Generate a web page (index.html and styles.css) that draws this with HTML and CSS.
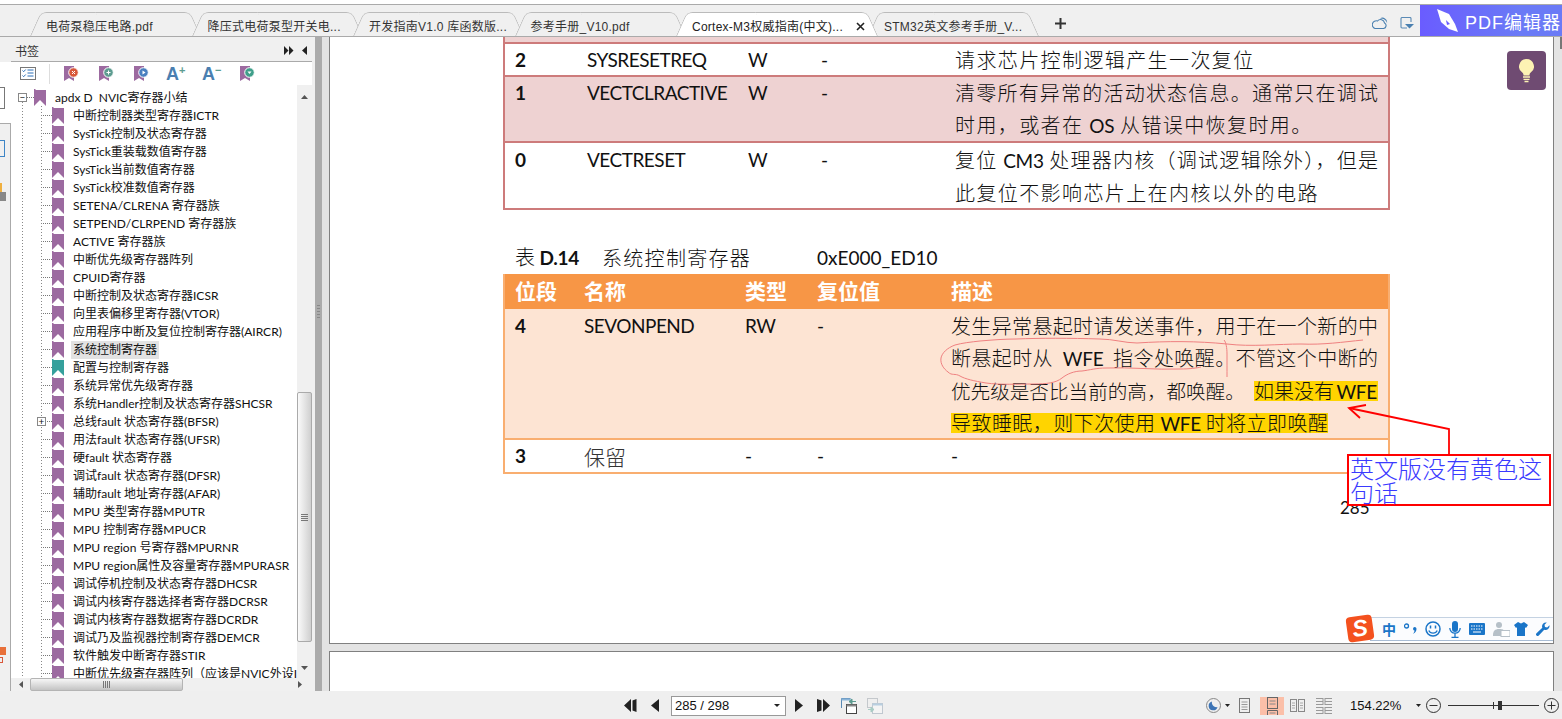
FILE: index.html
```html
<!DOCTYPE html>
<html lang="zh-CN">
<head>
    <meta charset="UTF-8">
    <title>Cortex-M3权威指南(中文).pdf</title>
    <link rel="stylesheet" href="styles.css">
</head>
<body>
<svg class="defs" width="0" height="0">
    <symbol id="mark" viewBox="0 0 12 17"><path d="M0 0h1l1 1h10v16l-1-1-1-1-1-1-1-1-1-1-1-1-1 1-1 1-1 1-1 1-1 1-1 1V2z"/></symbol>
</svg>
<div class="app">
    <div class="top-strip"></div>
    <div class="tabbar">
        <div class="tabs">
            <div class="tab">电荷泵稳压电路.pdf</div>
            <div class="tab">降压式电荷泵型开关电...</div>
            <div class="tab">开发指南V1.0 库函数版...</div>
            <div class="tab">参考手册_V10.pdf</div>
            <div class="tab active">Cortex-M3权威指南(中文)...
                <svg class="tab-close" width="9" height="9" viewBox="0 0 9 9"><path d="M1 1l7 7M8 1l-7 7" stroke="#222" stroke-width="1.6"/></svg>
            </div>
            <div class="tab">STM32英文参考手册_V...</div>
        </div>
        <svg class="tab-add" width="11" height="11" viewBox="0 0 11 11"><path d="M0 4.500h11v2H0zM4.500 0h2v11h-2z" fill="#333"/></svg>
        <svg class="cloud" width="16" height="12" viewBox="0 0 16 12"><path d="M3 11.500h8.500a3 3 0 0 0 1-5.600A4 4 0 0 0 5.500 4 3.500 3.500 0 0 0 3 11.500z" fill="none" stroke="#4a80b0" stroke-width="1.100"/><path d="M8 1.500a4.500 4.500 0 0 1 7 4.500c-.5-1.800-2.500-3.800-4.500-4.200z" fill="#4a80b0"/></svg>
        <svg class="save" width="14" height="12" viewBox="0 0 14 12"><path d="M7 11H2a1 1 0 0 1-1-1V1.500a1 1 0 0 1 1-1h8a1 1 0 0 1 1 1V5" fill="none" stroke="#5a8ab5" stroke-width="1.100"/><path d="M5 7h9l-4.500 4.500z" fill="#4a80b0"/></svg>
        <div class="pdf-edit">
            <svg width="22" height="24" viewBox="0 0 22 24"><path d="M0 0l12 5 6 10 3 8-9-3-8-7z" fill="#fff"/><path d="M9 11l4 4-3 1z" fill="#6a5cff"/></svg>
            <span>PDF编辑器</span>
        </div>
    </div>

    <div class="main">
        <div class="rail">
            <div class="rail-top"></div>
            <div class="rail-tab"><span class="rail-doc"></span></div>
            <div class="rail-rest">
                <span class="rail-blue"></span>
                <span class="rail-orange"></span>
                <span class="rail-gray"></span>
                <span class="rail-diamond"></span>
                <span class="rail-red"></span>
            </div>
        </div>

        <div class="sidebar">
            <div class="side-head">
                <span>书签</span>
                <div class="side-arrows">
                    <svg width="10" height="9" viewBox="0 0 10 9"><path d="M0 0l4.500 4.500L0 9zM5 0l4.500 4.500L5 9z" fill="#222"/></svg>
                    <svg width="5" height="9" viewBox="0 0 5 9"><path d="M5 0L0 4.500 5 9z" fill="#222"/></svg>
                </div>
            </div>
            <div class="side-body">
                <div class="side-tools">
                    <svg class="checklist" width="16" height="13" viewBox="0 0 16 13"><rect x=".5" y=".5" width="15" height="12" fill="none" stroke="#777"/><path d="M2.500 3.500l1.200 1.200 2-2.200M2.500 8.500l1.200 1.200 2-2.200" fill="none" stroke="#2a6fb8"/><path d="M7.500 3h6M7.500 6h6M7.500 9h6" stroke="#2a6fb8"/></svg>
                    <span class="tool-sep"></span>
                    <svg class="tool" width="15" height="17" viewBox="0 0 15 17"><path d="M0 1h10v15l-5-3-5 3z" fill="#9c6aa0"/><circle cx="9.500" cy="7.500" r="4.800" fill="#d9573a" stroke="#fff"/><path d="M8 6l3 3M11 6l-3 3" stroke="#fff"/></svg>
                    <svg class="tool" width="15" height="17" viewBox="0 0 15 17"><path d="M0 1h10v15l-5-3-5 3z" fill="#9c6aa0"/><circle cx="9.500" cy="7.500" r="4.800" fill="#5d9c90" stroke="#fff"/><path d="M7.500 7.500h4M9.500 5.500v4" stroke="#fff"/></svg>
                    <svg class="tool" width="15" height="17" viewBox="0 0 15 17"><path d="M0 1h10v15l-5-3-5 3z" fill="#9c6aa0"/><circle cx="9.500" cy="7.500" r="4.800" fill="#4a80c0" stroke="#fff"/><path d="M8.500 5.500l3 2-3 2z" fill="#fff"/></svg>
                    <span class="font-tool">A<i>+</i></span>
                    <span class="font-tool minus">A<i>−</i></span>
                    <svg class="tool last" width="15" height="17" viewBox="0 0 15 17"><path d="M0 1h10v15l-5-3-5 3z" fill="#9c6aa0"/><circle cx="9.500" cy="7.500" r="4.800" fill="#3f9f8a" stroke="#fff"/><path d="M7.500 6.500l2 2.500 2-2.500z" fill="#fff"/></svg>
                </div>
                <div class="side-tree">
                    <div class="tree">
                        <div class="node root">
                            <span class="expander">−</span><span class="dash"></span>
                            <svg class="mark"><use href="#mark"/></svg>
                            <span class="label">apdx D  NVIC寄存器小结</span>
                        </div>
                        <div class="node"><span class="dash"></span><svg class="mark"><use href="#mark"/></svg><span class="label">中断控制器类型寄存器ICTR</span></div>
                        <div class="node"><span class="dash"></span><svg class="mark"><use href="#mark"/></svg><span class="label">SysTick控制及状态寄存器</span></div>
                        <div class="node"><span class="dash"></span><svg class="mark"><use href="#mark"/></svg><span class="label">SysTick重装载数值寄存器</span></div>
                        <div class="node"><span class="dash"></span><svg class="mark"><use href="#mark"/></svg><span class="label">SysTick当前数值寄存器</span></div>
                        <div class="node"><span class="dash"></span><svg class="mark"><use href="#mark"/></svg><span class="label">SysTick校准数值寄存器</span></div>
                        <div class="node"><span class="dash"></span><svg class="mark"><use href="#mark"/></svg><span class="label">SETENA/CLRENA 寄存器族</span></div>
                        <div class="node"><span class="dash"></span><svg class="mark"><use href="#mark"/></svg><span class="label">SETPEND/CLRPEND 寄存器族</span></div>
                        <div class="node"><span class="dash"></span><svg class="mark"><use href="#mark"/></svg><span class="label">ACTIVE 寄存器族</span></div>
                        <div class="node"><span class="dash"></span><svg class="mark"><use href="#mark"/></svg><span class="label">中断优先级寄存器阵列</span></div>
                        <div class="node"><span class="dash"></span><svg class="mark"><use href="#mark"/></svg><span class="label">CPUID寄存器</span></div>
                        <div class="node"><span class="dash"></span><svg class="mark"><use href="#mark"/></svg><span class="label">中断控制及状态寄存器ICSR</span></div>
                        <div class="node"><span class="dash"></span><svg class="mark"><use href="#mark"/></svg><span class="label">向里表偏移里寄存器(VTOR)</span></div>
                        <div class="node"><span class="dash"></span><svg class="mark"><use href="#mark"/></svg><span class="label">应用程序中断及复位控制寄存器(AIRCR)</span></div>
                        <div class="node"><span class="dash"></span><svg class="mark"><use href="#mark"/></svg><span class="label selected">系统控制寄存器</span></div>
                        <div class="node"><span class="dash"></span><svg class="mark teal"><use href="#mark"/></svg><span class="label">配置与控制寄存器</span></div>
                        <div class="node"><span class="dash"></span><svg class="mark"><use href="#mark"/></svg><span class="label">系统异常优先级寄存器</span></div>
                        <div class="node"><span class="dash"></span><svg class="mark"><use href="#mark"/></svg><span class="label">系统Handler控制及状态寄存器SHCSR</span></div>
                        <div class="node"><span class="expander plus">+</span><span class="dash"></span><svg class="mark"><use href="#mark"/></svg><span class="label">总线fault 状态寄存器(BFSR)</span></div>
                        <div class="node"><span class="dash"></span><svg class="mark"><use href="#mark"/></svg><span class="label">用法fault 状态寄存器(UFSR)</span></div>
                        <div class="node"><span class="dash"></span><svg class="mark"><use href="#mark"/></svg><span class="label">硬fault 状态寄存器</span></div>
                        <div class="node"><span class="dash"></span><svg class="mark"><use href="#mark"/></svg><span class="label">调试fault 状态寄存器(DFSR)</span></div>
                        <div class="node"><span class="dash"></span><svg class="mark"><use href="#mark"/></svg><span class="label">辅助fault 地址寄存器(AFAR)</span></div>
                        <div class="node"><span class="dash"></span><svg class="mark"><use href="#mark"/></svg><span class="label">MPU 类型寄存器MPUTR</span></div>
                        <div class="node"><span class="dash"></span><svg class="mark"><use href="#mark"/></svg><span class="label">MPU 控制寄存器MPUCR</span></div>
                        <div class="node"><span class="dash"></span><svg class="mark"><use href="#mark"/></svg><span class="label">MPU region 号寄存器MPURNR</span></div>
                        <div class="node"><span class="dash"></span><svg class="mark"><use href="#mark"/></svg><span class="label">MPU region属性及容量寄存器MPURASR</span></div>
                        <div class="node"><span class="dash"></span><svg class="mark"><use href="#mark"/></svg><span class="label">调试停机控制及状态寄存器DHCSR</span></div>
                        <div class="node"><span class="dash"></span><svg class="mark"><use href="#mark"/></svg><span class="label">调试内核寄存器选择者寄存器DCRSR</span></div>
                        <div class="node"><span class="dash"></span><svg class="mark"><use href="#mark"/></svg><span class="label">调试内核寄存器数据寄存器DCRDR</span></div>
                        <div class="node"><span class="dash"></span><svg class="mark"><use href="#mark"/></svg><span class="label">调试乃及监视器控制寄存器DEMCR</span></div>
                        <div class="node"><span class="dash"></span><svg class="mark"><use href="#mark"/></svg><span class="label">软件触发中断寄存器STIR</span></div>
                        <div class="node"><span class="dash"></span><svg class="mark"><use href="#mark"/></svg><span class="label">中断优先级寄存器阵列（应该是NVIC外设I</span></div>
                    </div>
                    <div class="vscroll">
                        <div class="sb-arrow"><svg width="7" height="4" viewBox="0 0 7 4"><path d="M3.500 0L7 4H0z" fill="#555"/></svg></div>
                        <div class="vthumb"><span></span></div>
                        <div class="sb-arrow end"><svg width="7" height="4" viewBox="0 0 7 4"><path d="M0 0h7L3.500 4z" fill="#555"/></svg></div>
                    </div>
                </div>
                <div class="hscroll">
                    <div class="sb-arrow-h"><svg width="4" height="7" viewBox="0 0 4 7"><path d="M4 0v7L0 3.500z" fill="#555"/></svg></div>
                    <div class="hthumb"><span></span></div>
                    <div class="sb-arrow-h end"><svg width="4" height="7" viewBox="0 0 4 7"><path d="M0 0v7l4-3.500z" fill="#555"/></svg></div>
                </div>
            </div>
        </div>

        <div class="splitter"><span></span></div>

        <div class="docs">
            <div class="pane">
                <div class="page">
                    <div class="reg-table red">
                        <div class="strip"></div>
                        <div class="row">
                            <div class="cell bit">2</div><div class="cell">SYSRESETREQ</div><div class="cell">W</div><div class="cell">-</div>
                            <div class="desc"><div class="free">请求芯片控制逻辑产生一次复位</div></div>
                        </div>
                        <div class="row tint">
                            <div class="cell bit">1</div><div class="cell">VECTCLRACTIVE</div><div class="cell">W</div><div class="cell">-</div>
                            <div class="desc">
                                <div class="line">清零所有异常的活动状态信息。通常只在调试</div>
                                <div class="free">时用，或者在 <span class="en">OS</span> 从错误中恢复时用。</div>
                            </div>
                        </div>
                        <div class="row">
                            <div class="cell bit">0</div><div class="cell">VECTRESET</div><div class="cell">W</div><div class="cell">-</div>
                            <div class="desc">
                                <div class="line">复位 <span class="en">CM3</span> 处理器内核（调试逻辑除外），但是</div>
                                <div class="free">此复位不影响芯片上在内核以外的电路</div>
                            </div>
                        </div>
                    </div>

                    <div class="caption">
                        <span class="cap-title">表 <b class="en">D.14</b></span>
                        <span class="cap-name">系统控制寄存器</span>
                        <span class="cap-addr en">0xE000_ED10</span>
                    </div>

                    <div class="reg-table orange">
                        <div class="row head">
                            <div>位段</div><div>名称</div><div>类型</div><div>复位值</div><div>描述</div>
                        </div>
                        <div class="row tint">
                            <div class="cell bit">4</div><div class="cell">SEVONPEND</div><div class="cell">RW</div><div class="cell">-</div>
                            <div class="desc">
                                <div class="line">发生异常悬起时请发送事件，用于在一个新的中</div>
                                <div class="line">断悬起时从 <span class="en">&nbsp;WFE&nbsp;</span> 指令处唤醒。不管这个中断的</div>
                                <div class="split">
                                    <div class="part">优先级是否比当前的高，都唤醒。</div>
                                    <div class="mark-text part-mark">如果没有 <span class="en">WFE</span></div>
                                </div>
                                <div class="line-box"><div class="line mark-text part-full">导致睡眠，则下次使用 <span class="en">WFE</span> 时将立即唤醒</div></div>
                            </div>
                        </div>
                        <div class="row">
                            <div class="cell bit">3</div><div class="cell cjk">保留</div><div class="cell">-</div><div class="cell">-</div><div class="cell">-</div>
                        </div>
                    </div>

                    <div class="page-no">285</div>
                </div>

                <div class="hint">
                    <svg width="15" height="24" viewBox="0 0 15 24"><path d="M7.500 0a7.500 7.500 0 0 1 4 13.800c-.8.6-1 1.500-1 2.700h-6c0-1.200-.2-2.100-1-2.700A7.500 7.500 0 0 1 7.500 0z" fill="#fdf2b3"/><path d="M4 18h7M4.500 20.300h6M5.500 22.500h4" stroke="#fdf2b3" stroke-width="1.300"/></svg>
                </div>

                <div class="note">英文版没有黄色这句话</div>

                <div class="ime">
                    <div class="ime-logo"><span>S</span></div>
                    <span class="ime-zh">中</span>
                    <svg class="ime-punct" width="13" height="12" viewBox="0 0 13 12"><circle cx="2.500" cy="3" r="2" fill="none" stroke="#1a75c8" stroke-width="1.300"/><path d="M9.500 4.500a1.800 1.800 0 0 1 3 1.500c0 2-1.500 4-3.500 5 1-1.500 1.500-2.500 1.500-3.500-1.200 0-2-2-1-3z" fill="#1a75c8"/></svg>
                    <svg width="16" height="16" viewBox="0 0 16 16"><circle cx="8" cy="8" r="7" fill="none" stroke="#1a75c8" stroke-width="1.500"/><path d="M5.500 4.500v3M10.500 4.500v3" stroke="#1a75c8" stroke-width="1.500"/><path d="M3.800 9.500c1.500 3.500 7 3.500 8.400 0" fill="none" stroke="#1a75c8" stroke-width="1.300"/></svg>
                    <svg width="12" height="17" viewBox="0 0 12 17"><rect x="3" y="0" width="6" height="11" rx="3" fill="#1a75c8"/><path d="M.8 7a5.200 5.200 0 0 0 10.400 0M6 12.500V16M2.500 16.300h7" fill="none" stroke="#1a75c8" stroke-width="1.300"/></svg>
                    <svg width="16" height="12" viewBox="0 0 16 12"><rect width="16" height="12" rx="1" fill="#1a75c8"/><path d="M2 3h12M2 6h12" stroke="#fff" stroke-dasharray="1.500 1"/><path d="M4 9h8" stroke="#fff"/></svg>
                    <svg width="17" height="15" viewBox="0 0 17 15"><circle cx="6" cy="3" r="3" fill="#b6c0c8"/><path d="M0 13c0-4 2-6 6-6s5 1 6 2H9v5H0z" fill="#b6c0c8"/><rect x="8" y="8.500" width="9" height="6" fill="#fff" stroke="#b6c0c8"/></svg>
                    <svg class="ime-shirt" width="14" height="14" viewBox="0 0 14 14"><path d="M4 0l3 1.500L10 0l4 3-2 3-1-.7V14H3V5.300L2 6 0 3z" fill="#1a75c8"/></svg>
                    <svg width="14" height="14" viewBox="0 0 14 14"><path d="M13.500 3.200a4 4 0 0 1-5.300 4.500L2.800 13.500a1.500 1.500 0 0 1-2.300-2.200L6.300 5.800A4 4 0 0 1 10.800.5L8.500 2.800l.5 2.200 2.200.5z" fill="#1a75c8"/></svg>
                </div>
            </div>
            <div class="pane next"></div>
        </div>

        <div class="doc-scroll"><span></span></div>
    </div>

    <div class="statusbar">
        <div class="pager">
            <svg width="13" height="13" viewBox="0 0 13 13"><path d="M7 0v13L0 6.500zM8.500 1.500l4-1.500v13l-4-1.500z" fill="#222"/></svg>
            <svg class="pg-prev" width="8" height="13" viewBox="0 0 8 13"><path d="M8 0v13L0 6.500z" fill="#222"/></svg>
            <div class="page-box"><span>285 / 298</span><svg width="6" height="3" viewBox="0 0 6 3"><path d="M0 0h6L3 3z" fill="#222"/></svg></div>
            <svg class="pg-next" width="8" height="13" viewBox="0 0 8 13"><path d="M0 0v13l8-6.500z" fill="#222"/></svg>
            <svg class="pg-last" width="13" height="13" viewBox="0 0 13 13"><path d="M0 0l4.500 1.500v10L0 13zM6 0l7 6.500L6 13z" fill="#222"/></svg>
            <svg class="pg-copy" width="16" height="16" viewBox="0 0 16 16"><path d="M.5 10V.5h9" fill="none" stroke="#5a8ab5"/><path d="M.5.5h9v2h-9z" fill="#8ab4d8"/><rect x="5.500" y="6.500" width="10" height="9" fill="#fff" stroke="#444"/><path d="M5.500 6.500h10v2h-10z" fill="#888"/><path d="M8 3.500h7M8 3.500l3-2.500v5z" stroke="#5d9c90" fill="#5d9c90"/></svg>
            <svg class="pg-copy2" width="16" height="16" viewBox="0 0 16 16"><rect x=".5" y=".5" width="10" height="9" fill="none" stroke="#c4c8cc"/><rect x="5.500" y="5.500" width="10" height="10" fill="#f4f4f4" stroke="#c0c8d0"/><path d="M5.500 5.500h10v2h-10z" fill="#b8cfe0"/><path d="M1 11.500h6M7 11.500l-3-2.500v5z" stroke="#a8ccc4" fill="#a8ccc4"/></svg>
        </div>
        <div class="viewer">
            <svg width="15" height="15" viewBox="0 0 15 15"><circle cx="7.500" cy="7.500" r="7" fill="none" stroke="#888"/><path d="M6 3.500a4.500 4.500 0 1 0 5.500 5.500A4.500 4.500 0 0 1 6 3.500z" fill="#3d74b5"/></svg>
            <svg class="caret" width="5" height="3" viewBox="0 0 5 3"><path d="M0 0h5L2.500 3z" fill="#222"/></svg>
            <svg class="v-single" width="11" height="15" viewBox="0 0 11 15"><rect x=".5" y=".5" width="10" height="14" fill="none" stroke="#777"/><path d="M2.500 4h6M2.500 6.500h6M2.500 9h6M2.500 11.500h6" stroke="#999"/></svg>
            <div class="v-active">
                <svg width="11" height="18" viewBox="0 0 11 18"><rect x=".5" y=".5" width="10" height="11" fill="none" stroke="#666"/><path d="M2.500 4h6M2.500 7h6" stroke="#888"/><path d="M.5 18v-4.500h10V18" fill="none" stroke="#666"/><path d="M2.500 16h6" stroke="#888"/></svg>
            </div>
            <svg class="v-facing" width="15" height="13" viewBox="0 0 15 13"><rect x=".5" y=".5" width="6" height="12" fill="none" stroke="#888"/><rect x="8.500" y=".5" width="6" height="12" fill="none" stroke="#888"/><path d="M2 4h3M2 6.500h3M2 9h3M10 4h3M10 6.500h3M10 9h3" stroke="#aaa"/></svg>
            <svg class="v-grid" width="16" height="16" viewBox="0 0 16 16"><path d="M0 .5h7M0 3.500h7M0 6.500h7M9 .5h7M9 3.500h7M9 6.500h7M0 9.500h7M0 12.500h7M0 15.500h7M9 9.500h7M9 12.500h7M9 15.500h7M7 0v7M9 0v7M7 9v7M9 9v7" stroke="#999"/></svg>
            <span class="zoom-val">154.22%</span>
            <svg class="caret zoom-caret" width="5" height="3" viewBox="0 0 5 3"><path d="M0 0h5L2.500 3z" fill="#222"/></svg>
            <svg class="zoom-btn" width="15" height="15" viewBox="0 0 15 15"><circle cx="7.500" cy="7.500" r="7" fill="none" stroke="#333"/><path d="M3.500 7.500h8" stroke="#333"/></svg>
            <div class="slider"><span class="tick"></span><span class="knob"></span></div>
            <svg class="zoom-plus" width="15" height="15" viewBox="0 0 15 15"><circle cx="7.500" cy="7.500" r="7" fill="none" stroke="#333"/><path d="M3.500 7.500h8M7.500 3.500v8" stroke="#333"/></svg>
        </div>
    </div>

    <!-- hand drawn marks sit over the page, in window coordinates -->
    <svg class="overlay" width="1562" height="719" viewBox="0 0 1562 719">
        <path d="M1363 340c-20 2-40 5-62 4-22 0-50 3-74 0-30-3-60-3-90-1-12 0-24-4-37-4-30-1-60-1-84 0-12 0-24 1-36 2-9 1-18 2-25 4-8 3-13 8-14 13-1 6 3 11 7 14 4 4 7 1 12 4 5 3 14 5 26 7 14 2 32 1 48 1 12 0 22-1 28-6 5-4 12-7 20-7 8-1 14-3 24-3 24-1 50 2 74 1 10 0 17-1 21-2" fill="none" stroke="#ef8080" stroke-width="1"/>
        <path d="M1224 340c2 2 3 8 3 14 0 8 0 16 0 23" fill="none" stroke="#ef8080" stroke-width="1"/>
        <path d="M1449 454v-25l-100-21" fill="none" stroke="#f00" stroke-width="1.800"/>
        <path d="M1366 405l-17 3 11 10" fill="none" stroke="#f00" stroke-width="1.800"/>
    </svg>
</div>
</body>
</html>
```

FILE: styles.css
```css
* {
    box-sizing: border-box;
}
html, body {
    margin: 0;
    padding: 0;
    height: 100%;
    overflow: hidden;
}
body {
    font-family: "Liberation Sans", "Noto Sans CJK SC", sans-serif;
    font-size: 12px;
    color: #111;
    background: #fff;
}
svg {
    display: block;
    flex: none;
}
.defs {
    position: absolute;
}
.app {
    position: relative;
    width: 1562px;
    height: 719px;
    display: flex;
    flex-direction: column;
}
.top-strip {
    height: 5px;
    background: #fff;
    border-bottom: 1px solid #aaa;
}

/* tabs */
.tabbar {
    height: 32px;
    display: flex;
    align-items: flex-end;
    background: #f0f0f0;
    border-bottom: 1px solid #aaa;
    padding-left: 30px;
}
.tabs {
    display: flex;
}
.tab {
    position: relative;
    z-index: 0;
    width: 171.5px;
    height: 24px;
    padding: 7px 0 0 16px;
    line-height: 16px;
    letter-spacing: .25px;
    color: #333;
    white-space: nowrap;
}
.tab + .tab {
    margin-left: -10px;
}
.tab::before, .tab::after {
    content: "";
    position: absolute;
    z-index: -1;
    top: 0;
    bottom: 0;
    width: 55%;
    background: #f0f0f0;
    border-top: 1px solid #bbb;
}
.tab::before {
    left: 0;
    border-left: 1px solid #bbb;
    border-top-left-radius: 6px;
    transform: skewX(-24deg);
    transform-origin: bottom left;
}
.tab::after {
    right: 0;
    border-right: 1px solid #bbb;
    border-top-right-radius: 6px;
    transform: skewX(24deg);
    transform-origin: bottom right;
}
.tab.active {
    z-index: 1;
    width: 202px;
    color: #222;
}
.tab.active::before, .tab.active::after {
    background: #fff;
}
.tab-close {
    position: absolute;
    top: 10px;
    right: 13px;
}
.tab-add {
    margin: 0 0 7px 15px;
}
.cloud {
    margin: 0 0 7px auto;
}
.save {
    margin: 0 6px 7px 12px;
}
.pdf-edit {
    width: 142px;
    height: 31px;
    align-self: flex-start;
    display: flex;
    align-items: center;
    padding-left: 17px;
    background: linear-gradient(90deg, #6a5cff, #6a7af6 70%);
    color: #fff;
    font-size: 18px;
    letter-spacing: 1px;
    white-space: nowrap;
}
.pdf-edit span {
    margin-left: 6px;
}

/* main area */
.main {
    flex: 1;
    min-height: 0;
    display: flex;
}
.rail {
    width: 11px;
    display: flex;
    flex-direction: column;
}
.rail-top {
    height: 25px;
    background: #f0f0f0;
}
.rail-tab {
    height: 61px;
    padding-top: 25px;
    background: #fff;
}
.rail-doc {
    display: block;
    width: 5px;
    height: 22px;
    border: 1px solid #777;
    border-left: none;
}
.rail-rest {
    flex: 1;
    display: flex;
    flex-direction: column;
    background: #f0f0f0;
    border-top: 1px solid #aaa;
    border-right: 1px solid #aaa;
}
.rail-blue {
    width: 5px;
    height: 17px;
    margin-top: 16px;
    border: 1px solid #3d85c6;
    border-left: none;
}
.rail-orange {
    width: 2px;
    height: 14px;
    margin-top: 26px;
    background: #f0b040;
}
.rail-gray {
    width: 6px;
    height: 9px;
    margin-top: -5px;
    background: #888;
}
.rail-diamond {
    width: 6px;
    height: 8px;
    margin-top: 446px;
    background: #e8703a;
}
.rail-red {
    width: 3px;
    height: 6px;
    margin-top: 2px;
    border: 1px solid #d9573a;
    border-left: none;
}
.sidebar {
    width: 304px;
    display: flex;
    flex-direction: column;
    background: #f0f0f0;
}
.side-head {
    height: 24px;
    display: flex;
    align-items: center;
    justify-content: space-between;
    padding: 2px 8px 0 4px;
    font-size: 12px;
    color: #333;
}
.side-arrows {
    display: flex;
    gap: 8px;
}
.side-body {
    flex: 1;
    min-height: 0;
    display: flex;
    flex-direction: column;
    border-top: 1px solid #aaa;
    margin-right: 3px;
}
.side-tools {
    height: 23px;
    display: flex;
    align-items: center;
    gap: 20px;
    padding-left: 9px;
    background: #fff;
}
.checklist {
    margin-right: -7px;
}
.tool-sep {
    width: 1px;
    height: 20px;
    background: #ddd;
    margin-right: -6px;
}
.font-tool {
    display: flex;
    align-items: flex-start;
    width: 18px;
    margin-left: -3px;
    font-size: 18px;
    font-weight: bold;
    line-height: 18px;
    color: #4a7fb0;
}
.font-tool.minus {
    margin-left: -2px;
}
.font-tool i {
    font-style: normal;
    font-size: 11px;
    line-height: 10px;
    color: #5d9c90;
}
.side-tree {
    flex: 1;
    min-height: 0;
    display: flex;
}
.tree {
    flex: 1;
    min-width: 0;
    overflow: hidden;
    padding-top: 3px;
    font-family: Lato, "Noto Sans CJK SC", sans-serif;
    background-color: #fff;
    background-image: repeating-linear-gradient(to bottom, #888 0 1px, transparent 1px 3px), repeating-linear-gradient(to bottom, #888 0 1px, transparent 1px 3px);
    background-size: 1px 100%, 1px 100%;
    background-repeat: no-repeat;
    background-position: 11px 17px, 30px 21px;
}
.node {
    position: relative;
    height: 18px;
    display: flex;
    align-items: center;
    padding-left: 32px;
    white-space: pre;
}
.label {
    margin-top: 2px;
    line-height: 18px;
}
.dash {
    width: 9px;
    border-top: 1px dotted #777;
}
.mark {
    width: 12px;
    height: 17px;
    margin-right: 9px;
    fill: #9c6aa0;
}
.mark.teal {
    fill: #35a09c;
}
.label.selected {
    background: #e2e2e2;
    margin-left: -2px;
    padding: 0 2px;
}
.root {
    padding-left: 7px;
}
.root .dash {
    width: 7px;
}
.root .mark {
    margin: 0 9px 0 0;
    width: 12px;
}
.expander {
    width: 9px;
    height: 9px;
    border: 1px solid #888;
    background: #fff;
    font-size: 10px;
    line-height: 6px;
    text-align: center;
}
.expander.plus {
    position: absolute;
    left: 26px;
    top: 5px;
}
.vscroll {
    width: 15px;
    display: flex;
    flex-direction: column;
    background: #f0f0f0;
}
.sb-arrow {
    height: 20px;
    display: flex;
    align-items: center;
    justify-content: center;
    padding-top: 4px;
}
.sb-arrow.end {
    margin-top: auto;
    padding: 0;
}
.vthumb {
    height: 250px;
    margin-top: 287px;
    display: flex;
    align-items: center;
    justify-content: center;
    background: linear-gradient(90deg, #fafafa, #cfcfcf);
    border: 1px solid #aaa;
    border-radius: 2px;
}
.vthumb span {
    width: 7px;
    height: 7px;
    background: repeating-linear-gradient(to bottom, #777 0 1px, transparent 1px 2px);
}
.hscroll {
    height: 13px;
    display: flex;
    align-items: center;
    background: #f0f0f0;
}
.sb-arrow-h {
    width: 19px;
    display: flex;
    justify-content: center;
}
.sb-arrow-h.end {
    margin-left: auto;
    width: 24px;
}
.hthumb {
    width: 153px;
    height: 13px;
    display: flex;
    align-items: center;
    justify-content: center;
    background: linear-gradient(180deg, #f6f6f6, #c4c4c4);
    border: 1px solid #b4b4b4;
    border-radius: 2px;
}
.hthumb span {
    width: 7px;
    height: 7px;
    background: repeating-linear-gradient(to right, #777 0 1px, transparent 1px 2px);
}
.splitter {
    width: 7px;
    display: flex;
    justify-content: center;
    align-items: flex-start;
    background: #ababab;
}
.splitter span {
    width: 3px;
    height: 15px;
    margin-top: 268px;
    background: repeating-linear-gradient(to bottom, #888 0 1px, transparent 1px 3px);
}
.docs {
    flex: 1;
    min-width: 0;
    display: flex;
    flex-direction: column;
    background: #e3e3e3;
    padding-left: 7px;
}
.pane {
    position: relative;
    height: 607px;
    overflow: hidden;
    background: #fff;
    border: 1px solid #808080;
    border-top: none;
}
.pane.next {
    flex: 1;
    margin-top: 7px;
    border-top: 1px solid #808080;
    border-bottom: none;
}
.doc-scroll {
    width: 8px;
    background: #e4e4e4;
}
.doc-scroll span {
    display: block;
    width: 2px;
    height: 12px;
    margin-left: 6px;
    background: #777;
}

/* pdf page */
.page {
    width: 887px;
    margin-left: 173px;
    font-family: Lato, "Noto Sans CJK SC", sans-serif;
    font-size: 19px;
    color: #111;
}
.reg-table {
    border-left: 2px solid;
    border-right: 2px solid;
}
.reg-table.red {
    border-color: #cd7b7b;
}
.reg-table.orange {
    border-color: #f9ae70;
}
.strip {
    height: 7px;
    background: #eed2d2;
    border-bottom: 2px solid #cd7b7b;
}
.row {
    display: grid;
    grid-template-columns: 72px 161px 73px 134px 1fr;
    padding-left: 10px;
    border-bottom: 2px solid #cd7b7b;
    line-height: 32px;
}
.red .row:nth-child(2) {
    height: 33px;
}
.red .row:nth-child(3) {
    height: 66px;
}
.red .row:nth-child(4) {
    height: 67px;
    padding-top: 1px;
}
.red .tint {
    background: #eed2d2;
}
.orange .row {
    grid-template-columns: 69px 161px 72px 134px 1fr;
    border-color: #f9ae70;
}
.orange .tint {
    height: 131px;
    padding-top: 1px;
    background: #fde4d3;
}
.orange .row:last-child {
    height: 34px;
}
.orange .head {
    height: 35px;
    align-items: center;
    padding-bottom: 5px;
    border: none;
    background: #f79646;
    color: #fff;
    font-family: "Noto Sans CJK SC", sans-serif;
    font-size: 21px;
    font-weight: bold;
}
.cell {
    letter-spacing: -.5px;
}
.bit {
    font-weight: bold;
}
.cjk {
    font-family: "Noto Sans CJK SC", sans-serif;
    font-size: 21px;
    font-weight: 300;
    letter-spacing: 0;
    color: #333;
}
.desc {
    width: 427px;
    font-family: "Noto Sans CJK SC", sans-serif;
    font-size: 20px;
    font-weight: 300;
    color: #111;
}
.red .desc {
    width: 423px;
}
.en {
    font-family: Lato, sans-serif;
    font-size: 19px;
    font-weight: 400;
    letter-spacing: -.3px;
    color: #111;
}
.line {
    text-align: justify;
    text-align-last: justify;
}
.free {
    letter-spacing: 1.4px;
}
.split {
    display: flex;
    justify-content: space-between;
    align-items: center;
    height: 32px;
}
.part {
    width: 294px;
    font-size: 19.6px;
    white-space: nowrap;
}
.part-mark {
    width: 124px;
    white-space: nowrap;
    word-spacing: -2px;
}
.part-full {
    width: 377px;
}
.line-box {
    height: 32px;
    display: flex;
    align-items: center;
}
.mark-text {
    height: 20px;
    line-height: 20px;
    background: #ffd400;
}
.caption {
    height: 64px;
    display: flex;
    align-items: flex-end;
    padding-left: 12px;
    font-family: "Noto Sans CJK SC", sans-serif;
    font-size: 20px;
    font-weight: 300;
    line-height: 32px;
    color: #111;
}
.cap-title {
    width: 87px;
}
.cap-title b {
    font-weight: 700;
}
.cap-name {
    width: 215px;
    letter-spacing: 1.3px;
}
.cap-addr {
    letter-spacing: 0;
}
.page-no {
    margin: 24px 0 0 837px;
    font-size: 17px;
    line-height: 20px;
}

/* things lying over the page */
.hint {
    position: absolute;
    top: 14px;
    right: 7px;
    width: 39px;
    height: 39px;
    display: flex;
    align-items: center;
    justify-content: center;
    background: #6f4b72;
    border-radius: 4px;
}
.note {
    position: absolute;
    left: 1017px;
    top: 417px;
    width: 204px;
    height: 52px;
    padding: 0 0 0 1px;
    background: #fff;
    border: 2px solid #f00;
    font-family: "Noto Sans CJK SC", sans-serif;
    font-size: 24px;
    font-weight: 300;
    line-height: 24px;
    color: #3a3aff;
}
.ime {
    position: absolute;
    right: 0;
    top: 580px;
    width: 183px;
    height: 24px;
    display: flex;
    align-items: center;
    gap: 8px;
    padding-left: 12px;
    background: #fbfcfe;
    border-top: 1px solid #c4d2e2;
    border-bottom: 1px solid #a8bcd4;
}
.ime-shirt {
    margin-left: -4px;
}
.ime-logo {
    position: absolute;
    left: -23px;
    top: -2px;
    width: 26px;
    height: 25px;
    display: flex;
    align-items: center;
    justify-content: center;
    background: #f4511e;
    border-radius: 4px;
    transform: rotate(-8deg);
    color: #fff;
    font-size: 23px;
    font-weight: bold;
    font-style: italic;
}
.ime-zh {
    font-family: "Noto Sans CJK SC", sans-serif;
    font-size: 14px;
    font-weight: bold;
    color: #1a75c8;
}

/* status bar */
.statusbar {
    height: 28px;
    display: flex;
    align-items: center;
    justify-content: space-between;
    background: #efefef;
    padding: 1px 3px 0 624px;
}
.pager {
    display: flex;
    align-items: center;
}
.pg-prev {
    margin-left: 14px;
}
.page-box {
    width: 115px;
    height: 20px;
    margin-left: 12px;
    display: flex;
    align-items: center;
    justify-content: space-between;
    padding: 0 5px 0 3px;
    background: #fff;
    border: 1px solid #999;
    font-size: 13px;
    white-space: nowrap;
}
.pg-next {
    margin-left: 9px;
}
.pg-last {
    margin-left: 14px;
}
.pg-copy {
    margin-left: 11px;
}
.pg-copy2 {
    margin-left: 10px;
}
.viewer {
    display: flex;
    align-items: center;
}
.caret {
    margin-left: 4px;
}
.v-single {
    margin-left: 9px;
}
.v-active {
    width: 24px;
    height: 18px;
    margin-left: 10px;
    display: flex;
    justify-content: center;
    background: #fbbfa8;
}
.v-facing {
    margin-left: 6px;
}
.v-grid {
    margin-left: 11px;
}
.zoom-val {
    width: 51px;
    margin-left: 18px;
    font-size: 13px;
    white-space: nowrap;
}
.zoom-caret {
    margin-left: 15px;
}
.zoom-btn {
    margin-left: 5px;
}
.slider {
    position: relative;
    width: 91px;
    height: 1px;
    margin-left: 7px;
    background: #333;
}
.tick {
    position: absolute;
    left: 45px;
    top: -3px;
    width: 1px;
    height: 7px;
    background: #333;
}
.knob {
    position: absolute;
    left: 50px;
    top: -4px;
    width: 4px;
    height: 9px;
    background: #333;
}
.zoom-plus {
    margin-left: 5px;
}
.overlay {
    position: absolute;
    left: 0;
    top: 0;
    pointer-events: none;
}
```
